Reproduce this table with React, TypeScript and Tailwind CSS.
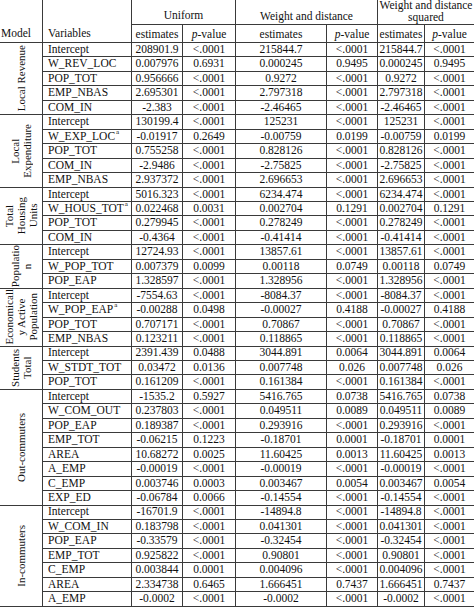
import React from "react";

type Row = [string, string, string, string, string, string, string];

interface Group {
  label: string[];
  rows: Row[];
}

const groups: Group[] = [
  {
    label: ["Local Revenue"],
    rows: [
      ["Intercept", "208901.9", "<.0001", "215844.7", "<.0001", "215844.7", "<.0001"],
      ["W_REV_LOC", "0.007976", "0.6931", "0.000245", "0.9495", "0.000245", "0.9495"],
      ["POP_TOT", "0.956666", "<.0001", "0.9272", "<.0001", "0.9272", "<.0001"],
      ["EMP_NBAS", "2.695301", "<.0001", "2.797318", "<.0001", "2.797318", "<.0001"],
      ["COM_IN", "-2.383", "<.0001", "-2.46465", "<.0001", "-2.46465", "<.0001"],
    ],
  },
  {
    label: ["Local", "Expenditure"],
    rows: [
      ["Intercept", "130199.4", "<.0001", "125231", "<.0001", "125231", "<.0001"],
      ["W_EXP_LOC^", "-0.01917", "0.2649", "-0.00759", "0.0199", "-0.00759", "0.0199"],
      ["POP_TOT", "0.755258", "<.0001", "0.828126", "<.0001", "0.828126", "<.0001"],
      ["COM_IN", "-2.9486", "<.0001", "-2.75825", "<.0001", "-2.75825", "<.0001"],
      ["EMP_NBAS", "2.937372", "<.0001", "2.696653", "<.0001", "2.696653", "<.0001"],
    ],
  },
  {
    label: ["Total", "Housing", "Units"],
    rows: [
      ["Intercept", "5016.323", "<.0001", "6234.474", "<.0001", "6234.474", "<.0001"],
      ["W_HOUS_TOT^", "0.022468", "0.0031", "0.002704", "0.1291", "0.002704", "0.1291"],
      ["POP_TOT", "0.279945", "<.0001", "0.278249", "<.0001", "0.278249", "<.0001"],
      ["COM_IN", "-0.4364", "<.0001", "-0.41414", "<.0001", "-0.41414", "<.0001"],
    ],
  },
  {
    label: ["Populatio", "n"],
    rows: [
      ["Intercept", "12724.93", "<.0001", "13857.61", "<.0001", "13857.61", "<.0001"],
      ["W_POP_TOT", "0.007379", "0.0099", "0.00118", "0.0749", "0.00118", "0.0749"],
      ["POP_EAP", "1.328597", "<.0001", "1.328956", "<.0001", "1.328956", "<.0001"],
    ],
  },
  {
    label: ["Economicall", "y Active", "Population"],
    rows: [
      ["Intercept", "-7554.63", "<.0001", "-8084.37", "<.0001", "-8084.37", "<.0001"],
      ["W_POP_EAP^", "-0.00288", "0.0498", "-0.00027", "0.4188", "-0.00027", "0.4188"],
      ["POP_TOT", "0.707171", "<.0001", "0.70867", "<.0001", "0.70867", "<.0001"],
      ["EMP_NBAS", "0.123211", "<.0001", "0.118865", "<.0001", "0.118865", "<.0001"],
    ],
  },
  {
    label: ["Students", "Total"],
    rows: [
      ["Intercept", "2391.439", "0.0488", "3044.891", "0.0064", "3044.891", "0.0064"],
      ["W_STDT_TOT", "0.03472", "0.0136", "0.007748", "0.026", "0.007748", "0.026"],
      ["POP_TOT", "0.161209", "<.0001", "0.161384", "<.0001", "0.161384", "<.0001"],
    ],
  },
  {
    label: ["Out-commuters"],
    rows: [
      ["Intercept", "-1535.2", "0.5927", "5416.765", "0.0738", "5416.765", "0.0738"],
      ["W_COM_OUT", "0.237803", "<.0001", "0.049511", "0.0089", "0.049511", "0.0089"],
      ["POP_EAP", "0.189387", "<.0001", "0.293916", "<.0001", "0.293916", "<.0001"],
      ["EMP_TOT", "-0.06215", "0.1223", "-0.18701", "0.0001", "-0.18701", "0.0001"],
      ["AREA", "10.68272", "0.0025", "11.60425", "0.0013", "11.60425", "0.0013"],
      ["A_EMP", "-0.00019", "<.0001", "-0.00019", "<.0001", "-0.00019", "<.0001"],
      ["C_EMP", "0.003746", "0.0003", "0.003467", "0.0054", "0.003467", "0.0054"],
      ["EXP_ED", "-0.06784", "0.0066", "-0.14554", "<.0001", "-0.14554", "<.0001"],
    ],
  },
  {
    label: ["In-commuters"],
    rows: [
      ["Intercept", "-16701.9", "<.0001", "-14894.8", "<.0001", "-14894.8", "<.0001"],
      ["W_COM_IN", "0.183798", "<.0001", "0.041301", "<.0001", "0.041301", "<.0001"],
      ["POP_EAP", "-0.33579", "<.0001", "-0.32454", "<.0001", "-0.32454", "<.0001"],
      ["EMP_TOT", "0.925822", "<.0001", "0.90801", "<.0001", "0.90801", "<.0001"],
      ["C_EMP", "0.003844", "0.0001", "0.004096", "<.0001", "0.004096", "<.0001"],
      ["AREA", "2.334738", "0.6465", "1.666451", "0.7437", "1.666451", "0.7437"],
      ["A_EMP", "-0.0002", "<.0001", "-0.0002", "<.0001", "-0.0002", "<.0001"],
    ],
  },
];

// full class names so tailwind picks them up
const spanClass: Record<number, string> = {
  3: "row-span-3",
  4: "row-span-4",
  5: "row-span-5",
  7: "row-span-7",
  8: "row-span-8",
};

const line = "border-[#3a3a3a]";

function PValue() {
  return (
    <span>
      <i>p</i>-value
    </span>
  );
}

function VarName({ name }: { name: string }) {
  // trailing ^ marks a superscript "a"
  if (name.endsWith("^")) {
    return (
      <span>
        {name.slice(0, -1)}
        <sup className="text-[7px] relative -top-[6px] ml-[1px]">a</sup>
      </span>
    );
  }
  return <span>{name}</span>;
}

export default function App() {
  return (
    <div className="w-[474px] h-[607px] overflow-hidden bg-white text-[#111] font-['Liberation_Serif',serif] text-[11.5px] leading-none">
      <div className="grid grid-cols-[43px_89px_51px_53px_91px_51px_47px_49px] grid-rows-[25px_18px_repeat(39,14.46px)]">
        {/* header */}
        <div className={`row-span-2 border-r border-b ${line} flex items-end pb-[3px] pl-[1px]`}>Model</div>
        <div className={`row-span-2 border-r border-b ${line} flex items-end pb-[3px] pl-[5px]`}>Variables</div>
        <div className={`col-span-2 border-r border-b ${line} flex items-end justify-center pb-[3px]`}>Uniform</div>
        <div className={`col-span-2 border-r border-b ${line} flex items-end justify-center pb-[2px]`}>
          Weight and distance
        </div>
        <div
          className={`col-span-2 border-b ${line} flex items-end justify-center pb-[1px] text-center leading-[12px] whitespace-nowrap`}
        >
          Weight and distance
          <br />
          squared
        </div>
        <div className={`border-r border-b ${line} flex items-end justify-center pb-[2px]`}>estimates</div>
        <div className={`border-r border-b ${line} flex items-end justify-center pb-[2px]`}>
          <PValue />
        </div>
        <div className={`border-r border-b ${line} flex items-end justify-center pb-[2px]`}>estimates</div>
        <div className={`border-r border-b ${line} flex items-end justify-center pb-[2px]`}>
          <PValue />
        </div>
        <div className={`border-r border-b ${line} flex items-end justify-center pb-[2px]`}>estimates</div>
        <div className={`border-b ${line} flex items-end justify-center pb-[2px]`}>
          <PValue />
        </div>

        {/* body */}
        {groups.map((g) => (
          <React.Fragment key={g.label.join(" ")}>
            <div
              className={`col-start-1 ${spanClass[g.rows.length]} border-r border-b ${line} flex items-center justify-center`}
            >
              <div className="[writing-mode:vertical-rl] rotate-180 text-center text-[11px] leading-[12px] whitespace-nowrap">
                {g.label.map((l, i) => (
                  <React.Fragment key={i}>
                    {i > 0 && <br />}
                    {l}
                  </React.Fragment>
                ))}
              </div>
            </div>
            {g.rows.map((r, ri) => (
              <React.Fragment key={ri}>
                <div className={`col-start-2 border-r border-b ${line} flex items-center pl-[5px] whitespace-nowrap`}>
                  <VarName name={r[0]} />
                </div>
                {r.slice(1).map((v, vi) => (
                  <div
                    key={vi}
                    className={`${vi < 5 ? "border-r" : ""} border-b ${line} flex items-center justify-center whitespace-nowrap`}
                  >
                    {v}
                  </div>
                ))}
              </React.Fragment>
            ))}
          </React.Fragment>
        ))}
      </div>
    </div>
  );
}
